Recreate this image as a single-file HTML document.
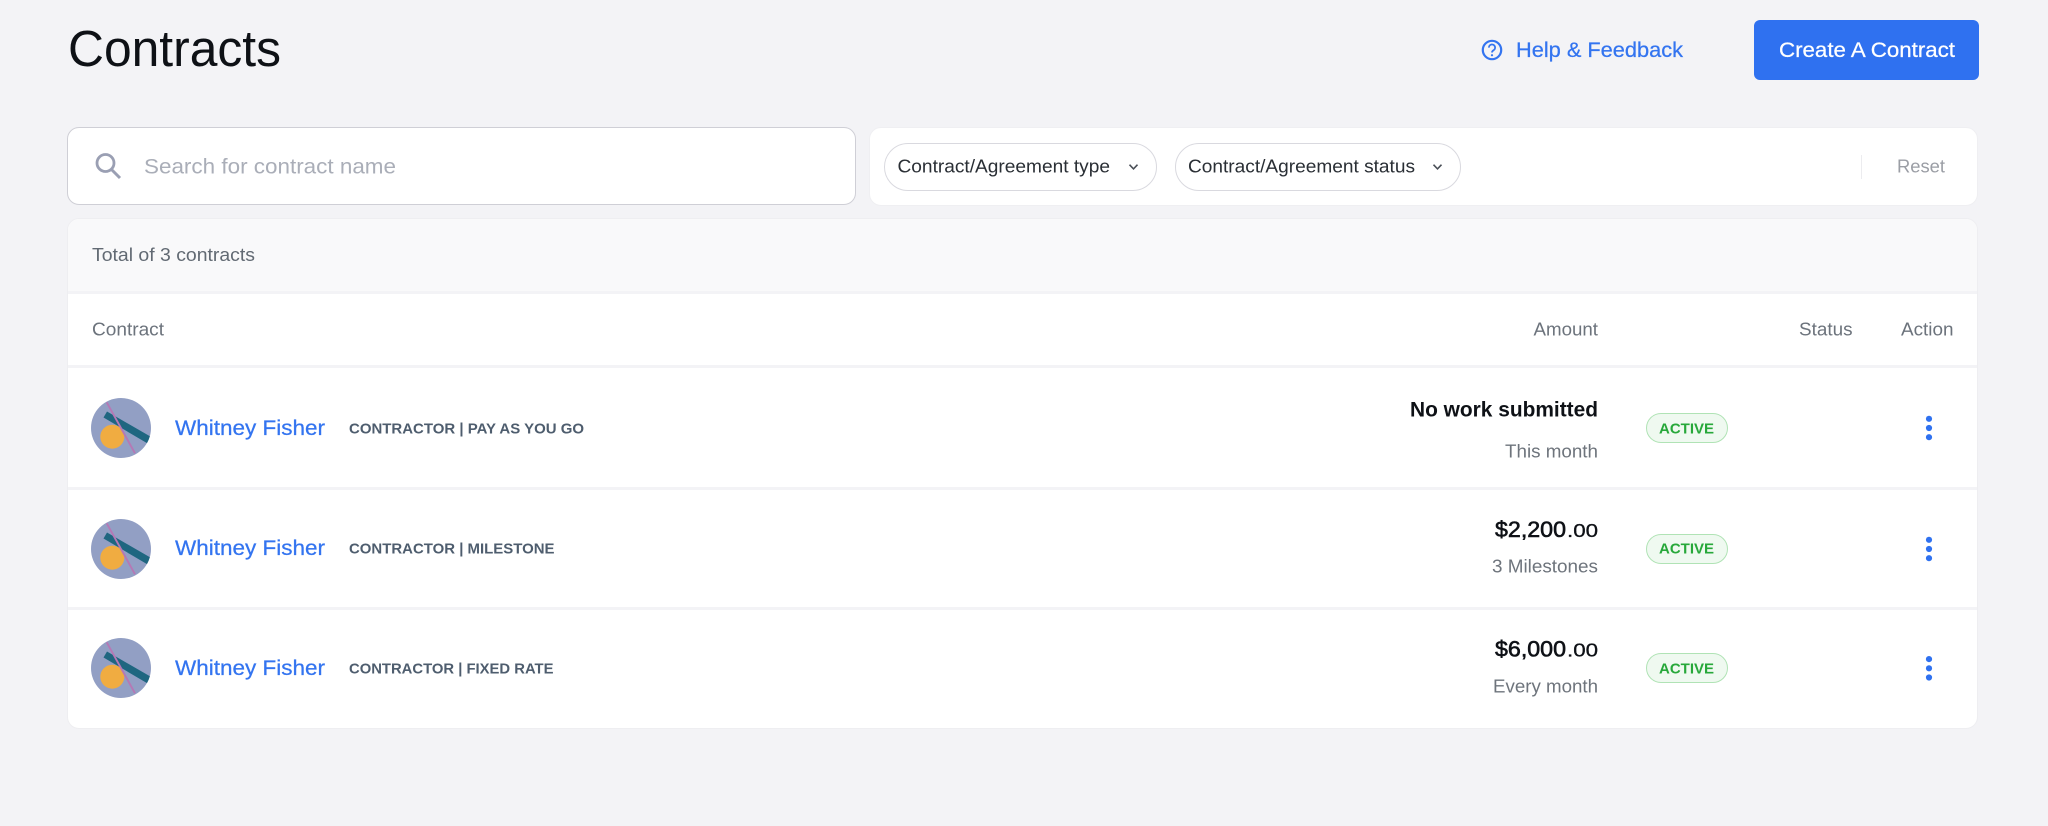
<!DOCTYPE html>
<html lang="en">
<head>
<meta charset="utf-8">
<title>Contracts</title>
<style>
html,body{margin:0;padding:0;width:2048px;height:826px;overflow:hidden;background:#f3f3f6;}
body{position:relative;font-family:"Liberation Sans",sans-serif;}
.box{position:absolute;box-sizing:border-box;}
svg{position:absolute;left:0;top:0;}
text{font-family:"Liberation Sans",sans-serif;}
.m{stroke-width:.25px;}
</style>
</head>
<body>
<div class="box" style="left:1754px;top:20px;width:225px;height:60px;background:#2f71f0;border-radius:6px;"></div>
<div class="box" style="left:67px;top:127px;width:789px;height:78px;background:#fff;border:1.5px solid #cfcfd6;border-radius:12px;"></div>
<div class="box" style="left:869px;top:127px;width:1109px;height:79px;background:#fff;border:1px solid #efeff2;border-radius:12px;"></div>
<div class="box" style="left:884px;top:143px;width:273px;height:48px;background:#fff;border:1.5px solid #d9d9df;border-radius:24px;"></div>
<div class="box" style="left:1175px;top:143px;width:286px;height:48px;background:#fff;border:1.5px solid #d9d9df;border-radius:24px;"></div>
<div class="box" style="left:1861px;top:155px;width:1px;height:24px;background:#ececef;"></div>
<div class="box" style="left:67px;top:218px;width:1911px;height:511px;background:#fff;border:1px solid #eeeef1;border-radius:12px;overflow:hidden;">
  <div style="position:absolute;left:0;top:0;right:0;height:72px;background:#f9f9fa;"></div>
  <div style="position:absolute;left:0;top:72px;right:0;height:3px;background:#f3f3f6;"></div>
  <div style="position:absolute;left:0;top:146px;right:0;height:3px;background:#f3f3f6;"></div>
  <div style="position:absolute;left:0;top:268px;right:0;height:3px;background:#f3f3f6;"></div>
  <div style="position:absolute;left:0;top:388px;right:0;height:3px;background:#f3f3f6;"></div>
</div>
<div class="box" style="left:1646px;top:413px;width:82px;height:30px;background:#eff9f0;border:1.5px solid #b0e3b5;border-radius:15px;"></div>
<div class="box" style="left:1646px;top:534px;width:82px;height:30px;background:#eff9f0;border:1.5px solid #b0e3b5;border-radius:15px;"></div>
<div class="box" style="left:1646px;top:653px;width:82px;height:30px;background:#eff9f0;border:1.5px solid #b0e3b5;border-radius:15px;"></div>

<svg width="2048" height="826" viewBox="0 0 2048 826" xmlns="http://www.w3.org/2000/svg">
  <defs>
    <clipPath id="av"><circle cx="30" cy="30" r="30"/></clipPath>
    <g id="avatar">
      <g clip-path="url(#av)">
        <rect width="60" height="60" fill="#929fc4"/>
        <path d="M12.5 19.5 16 13.5 61 39.5 57.5 46Z" fill="#1f6680"/>
        <circle cx="21.3" cy="38.7" r="12" fill="#f0ac41"/>
        <path d="M15.7 4.3 44 55.3" stroke="#b578b5" stroke-width="1.9" fill="none"/>
      </g>
    </g>
    <g id="chev"><path d="M-4 -2.3 0 1.9 4 -2.3" fill="none" stroke="#4a4f57" stroke-width="1.6"/></g>
    <g id="dots" fill="#2f71f0"><circle cx="0" cy="-9.2" r="3.1"/><circle cx="0" cy="0" r="3.1"/><circle cx="0" cy="9.2" r="3.1"/></g>
  </defs>

  <text x="68" y="66" font-size="51" fill="#0e1116" textLength="213" lengthAdjust="spacingAndGlyphs">Contracts</text>

  <circle cx="1492" cy="50" r="9.2" fill="none" stroke="#3374f0" stroke-width="2.2"/>
  <path d="M1488.9 47.6a3.1 3.1 0 1 1 4.6 2.7c-1 .6-1.5 1.2-1.5 2.2" fill="none" stroke="#3374f0" stroke-width="1.8"/>
  <circle cx="1492" cy="55.2" r="1.1" fill="#3374f0"/>
  <text x="1516" y="57" font-size="21.5" fill="#3374f0" stroke="#3374f0" class="m" textLength="167" lengthAdjust="spacingAndGlyphs">Help &amp; Feedback</text>
  <text x="1779" y="57" font-size="21.5" fill="#fff" stroke="#fff" class="m" textLength="176" lengthAdjust="spacingAndGlyphs">Create A Contract</text>

  <circle cx="105.5" cy="163" r="8.5" fill="none" stroke="#9a9fb3" stroke-width="2.8"/>
  <path d="M111.5 169.5 120 178" fill="none" stroke="#9a9fb3" stroke-width="3"/>
  <text x="144" y="173.5" font-size="21.5" fill="#aaaeb8" textLength="252" lengthAdjust="spacingAndGlyphs">Search for contract name</text>

  <text x="897.5" y="172.7" font-size="18.3" fill="#2a2f35" textLength="212.5" lengthAdjust="spacingAndGlyphs">Contract/Agreement type</text>
  <use href="#chev" x="1133.5" y="167"/>
  <text x="1188" y="172.7" font-size="18.3" fill="#2a2f35" textLength="227" lengthAdjust="spacingAndGlyphs">Contract/Agreement status</text>
  <use href="#chev" x="1437.5" y="167"/>
  <text x="1897" y="172.7" font-size="18.3" fill="#9b9ea5" textLength="48" lengthAdjust="spacingAndGlyphs">Reset</text>

  <text x="92" y="261" font-size="18.3" fill="#626a73" textLength="163" lengthAdjust="spacingAndGlyphs">Total of 3 contracts</text>

  <text x="92" y="335.7" font-size="18.3" fill="#6c737c" textLength="72" lengthAdjust="spacingAndGlyphs">Contract</text>
  <text x="1533.5" y="335.7" font-size="18.3" fill="#6c737c" textLength="64.5" lengthAdjust="spacingAndGlyphs">Amount</text>
  <text x="1799" y="335.7" font-size="18.3" fill="#6c737c" textLength="53.5" lengthAdjust="spacingAndGlyphs">Status</text>
  <text x="1901" y="335.7" font-size="18.3" fill="#6c737c" textLength="52.5" lengthAdjust="spacingAndGlyphs">Action</text>

  <!-- Row 1 -->
  <use href="#avatar" x="91" y="398"/>
  <text x="175" y="435" font-size="21.5" fill="#3374f0" stroke="#3374f0" class="m" textLength="150" lengthAdjust="spacingAndGlyphs">Whitney Fisher</text>
  <text x="349" y="433.5" font-size="14.8" font-weight="700" fill="#4e5d6e" textLength="235" lengthAdjust="spacingAndGlyphs">CONTRACTOR | PAY AS YOU GO</text>
  <text x="1410" y="416.7" font-size="21.5" font-weight="700" fill="#0e1116" textLength="188" lengthAdjust="spacingAndGlyphs">No work submitted</text>
  <text x="1505" y="457.7" font-size="18.3" fill="#6e747c" textLength="93" lengthAdjust="spacingAndGlyphs">This month</text>
  <text x="1659" y="433.5" font-size="14.8" font-weight="700" fill="#27a83a" textLength="55" lengthAdjust="spacingAndGlyphs">ACTIVE</text>
  <use href="#dots" x="1929" y="428"/>

  <!-- Row 2 -->
  <use href="#avatar" x="91" y="519"/>
  <text x="175" y="555" font-size="21.5" fill="#3374f0" stroke="#3374f0" class="m" textLength="150" lengthAdjust="spacingAndGlyphs">Whitney Fisher</text>
  <text x="349" y="553.5" font-size="14.8" font-weight="700" fill="#4e5d6e" textLength="205.5" lengthAdjust="spacingAndGlyphs">CONTRACTOR | MILESTONE</text>
  <text x="1495" y="537" font-size="22" fill="#0e1116" stroke="#0e1116" stroke-width=".6" textLength="71" lengthAdjust="spacingAndGlyphs">$2,200</text>
  <text x="1567" y="537" font-size="18.5" fill="#0e1116" stroke="#0e1116" stroke-width=".3" textLength="31" lengthAdjust="spacingAndGlyphs">.00</text>
  <text x="1492" y="572.7" font-size="18.3" fill="#6e747c" textLength="106" lengthAdjust="spacingAndGlyphs">3 Milestones</text>
  <text x="1659" y="553.5" font-size="14.8" font-weight="700" fill="#27a83a" textLength="55" lengthAdjust="spacingAndGlyphs">ACTIVE</text>
  <use href="#dots" x="1929" y="549"/>

  <!-- Row 3 -->
  <use href="#avatar" x="91" y="638"/>
  <text x="175" y="675" font-size="21.5" fill="#3374f0" stroke="#3374f0" class="m" textLength="150" lengthAdjust="spacingAndGlyphs">Whitney Fisher</text>
  <text x="349" y="673.5" font-size="14.8" font-weight="700" fill="#4e5d6e" textLength="204.5" lengthAdjust="spacingAndGlyphs">CONTRACTOR | FIXED RATE</text>
  <text x="1495" y="656.7" font-size="22" fill="#0e1116" stroke="#0e1116" stroke-width=".6" textLength="71" lengthAdjust="spacingAndGlyphs">$6,000</text>
  <text x="1567" y="656.7" font-size="18.5" fill="#0e1116" stroke="#0e1116" stroke-width=".3" textLength="31" lengthAdjust="spacingAndGlyphs">.00</text>
  <text x="1493" y="692.7" font-size="18.3" fill="#6e747c" textLength="105" lengthAdjust="spacingAndGlyphs">Every month</text>
  <text x="1659" y="673.5" font-size="14.8" font-weight="700" fill="#27a83a" textLength="55" lengthAdjust="spacingAndGlyphs">ACTIVE</text>
  <use href="#dots" x="1929" y="668.3"/>
</svg>
</body>
</html>
